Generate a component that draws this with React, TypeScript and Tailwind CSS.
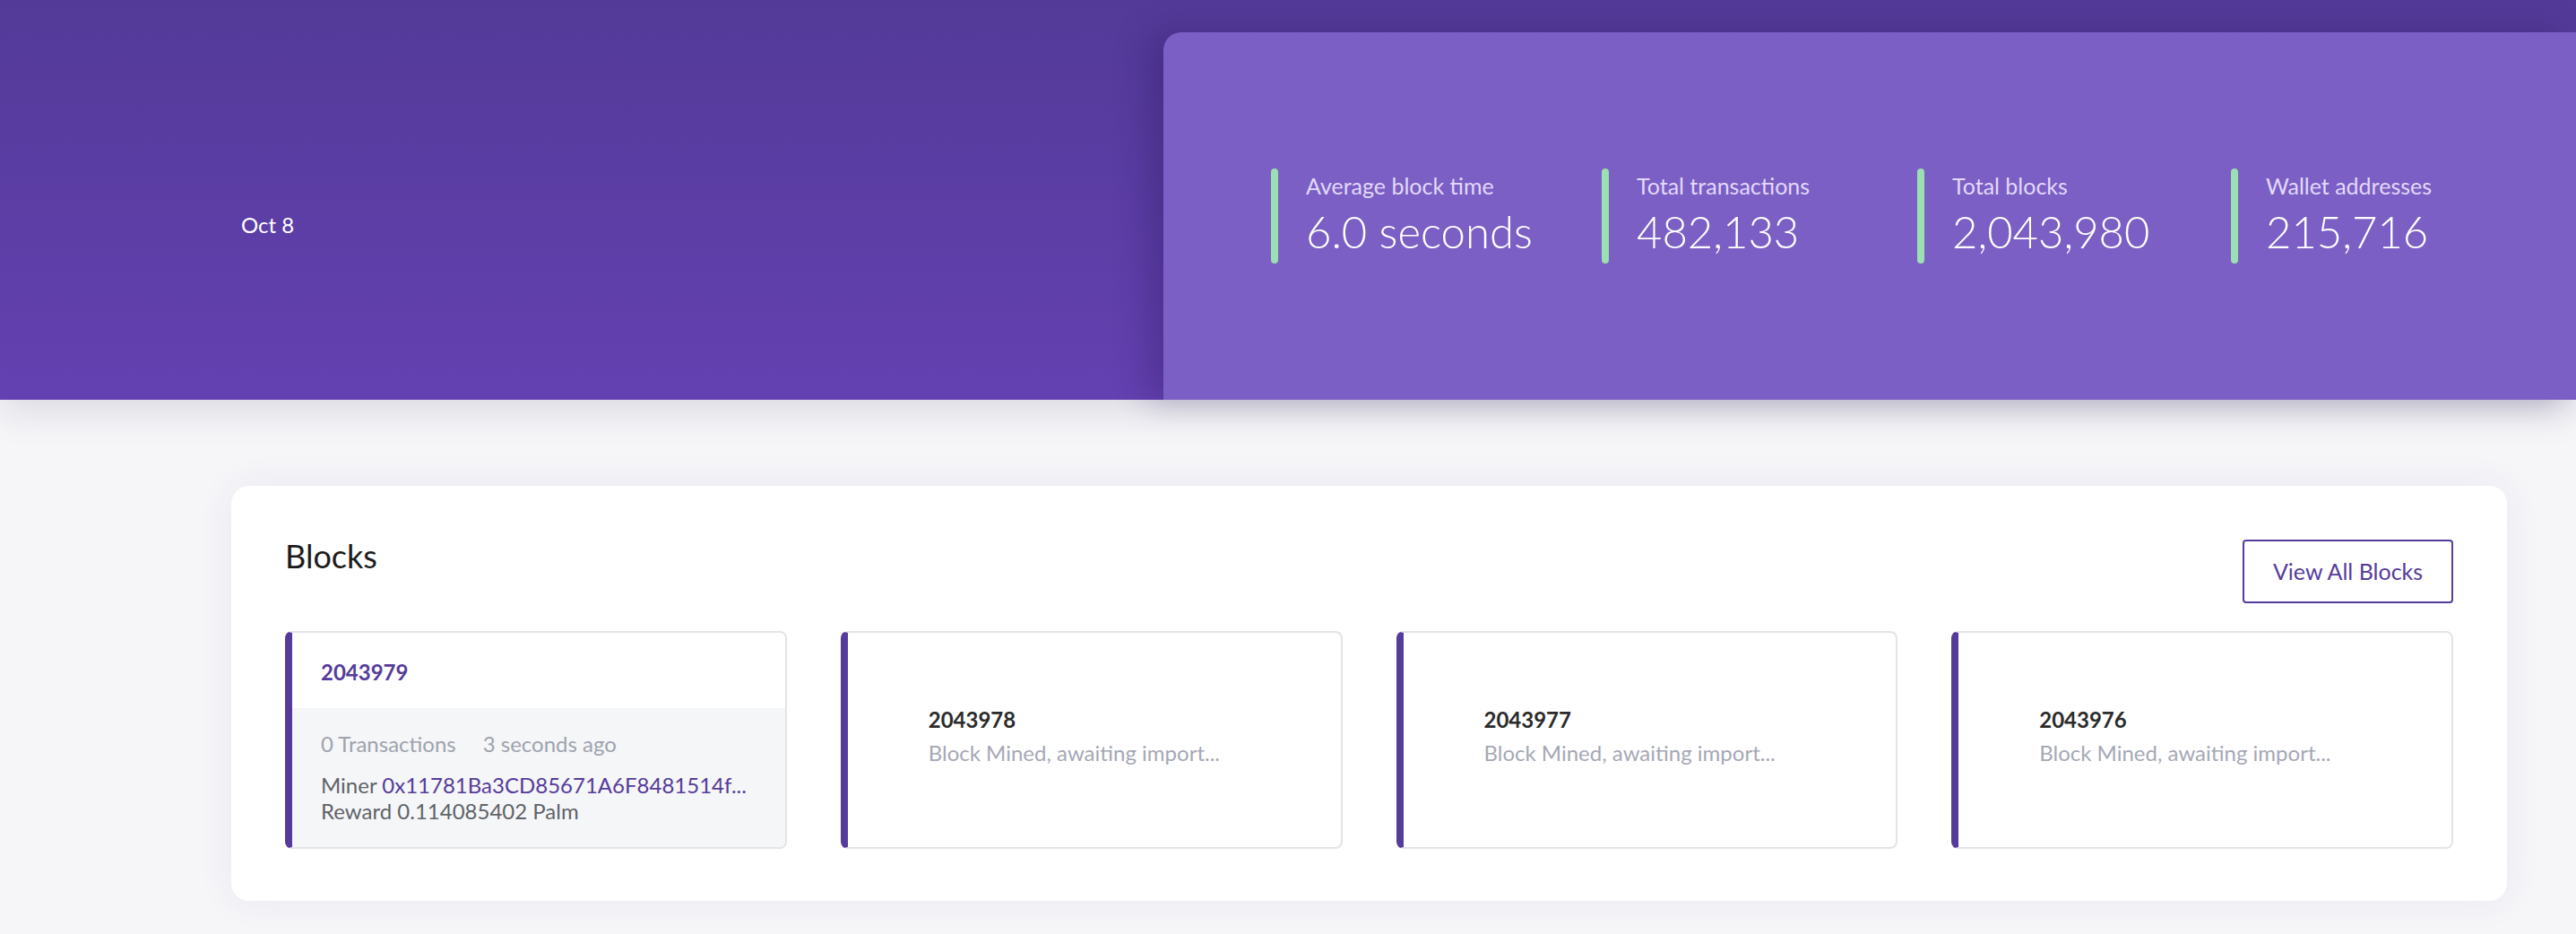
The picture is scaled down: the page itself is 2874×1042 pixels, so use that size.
const stats = [
  { label: "Average block time", value: "6.0 seconds", w: "w-[369px]" },
  { label: "Total transactions", value: "482,133", w: "w-[352px]" },
  { label: "Total blocks", value: "2,043,980", w: "w-[350px]" },
  { label: "Wallet addresses", value: "215,716", w: "w-auto" },
];

const pending = ["2043978", "2043977", "2043976"];

function Stat({ label, value, w }: { label: string; value: string; w: string }) {
  return (
    <div className={`flex items-stretch gap-[31px] ${w}`}>
      <div className="w-2 rounded-full bg-[#9be0b0]" />
      <div className="flex flex-col py-[2px]">
        <span className="text-[25px] leading-[34px] text-[#e2d9fa]">{label}</span>
        <span className="text-[49px] font-light leading-[68px] text-white">{value}</span>
      </div>
    </div>
  );
}

function LatestBlock() {
  return (
    <div className="flex h-[243px] flex-col overflow-hidden rounded-lg border-2 border-l-8 border-[#e2e4e9] border-l-[#553c9a]">
      <div className="flex h-[84px] items-center bg-white px-8 pt-[4px]">
        <span className="text-[24px] font-bold text-[#553c9a]">2043979</span>
      </div>
      <div className="flex flex-1 flex-col bg-[#f5f6f8] px-8 pt-[24px] text-[24px]">
        <div className="flex gap-[30px] leading-[32px] text-[#9ea3ad]">
          <span>0 Transactions</span>
          <span>3 seconds ago</span>
        </div>
        <div className="mt-[15px] whitespace-nowrap leading-[29px] text-[#5f6368]">
          Miner <span className="text-[#553c9a]">0x11781Ba3CD85671A6F8481514f...</span>
        </div>
        <div className="leading-[29px] text-[#5f6368]">Reward 0.114085402 Palm</div>
      </div>
    </div>
  );
}

function PendingBlock({ num }: { num: string }) {
  return (
    <div className="flex h-[243px] flex-col justify-center rounded-lg border-2 border-l-8 border-[#e2e4e9] border-l-[#553c9a] bg-white pb-[10px] pl-[90px] text-[24px]">
      <span className="font-bold leading-[37px] text-[#2b2b2b]">{num}</span>
      <span className="leading-[37px] text-[#a5a8b5]">Block Mined, awaiting import...</span>
    </div>
  );
}

export default function App() {
  return (
    <div className="min-h-[1042px] bg-[#f6f6f9] font-['Lato','Noto_Sans',sans-serif]">
      <header className="relative z-10 flex h-[446px] bg-linear-to-b from-[#533a98] to-[#6441b1] shadow-[0_12px_40px_rgba(30,20,60,0.13)]">
        <div className="flex w-[1298px] items-center pl-[269px] pt-[56px]">
          <span className="text-[24px] text-white">Oct 8</span>
        </div>
        <div className="mt-9 flex flex-1 items-center rounded-tl-[20px] bg-[#7b5fc4] pl-[120px] shadow-[-18px_0_36px_rgba(40,20,90,0.3)]">
          {stats.map((s) => (
            <Stat key={s.label} {...s} />
          ))}
        </div>
      </header>

      <main className="pt-[96px]">
        <section className="ml-[258px] w-[2539px] rounded-[20px] bg-white p-[60px] pb-[58px] shadow-[0_0_40px_rgba(60,60,120,0.07)]">
          <div className="flex items-start justify-between">
            <h2 className="text-[36px] leading-[36px] text-[#1c1c1c]">Blocks</h2>
            <button className="mb-[31px] h-[71px] w-[235px] rounded-[4px] border-2 border-[#553c9a] text-[25px] text-[#553c9a]">
              View All Blocks
            </button>
          </div>
          <div className="grid grid-cols-4 gap-[60px]">
            <LatestBlock />
            {pending.map((n) => (
              <PendingBlock key={n} num={n} />
            ))}
          </div>
        </section>
      </main>
    </div>
  );
}
